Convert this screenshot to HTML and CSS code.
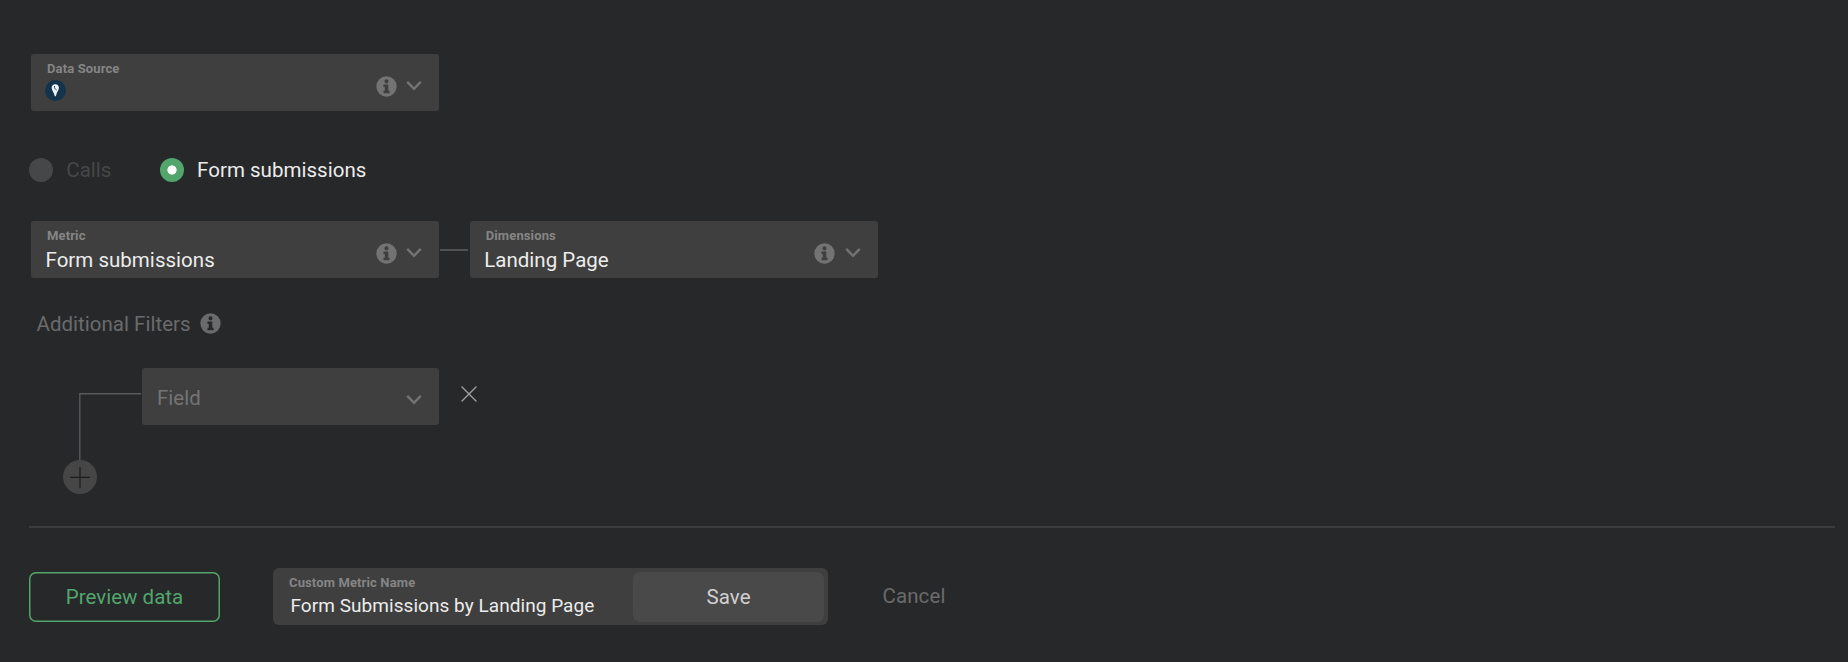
FILE: index.html
```html
<!DOCTYPE html>
<html lang="en">
<head>
<meta charset="utf-8">
<title>Custom metric</title>
<link rel="stylesheet" href="styles.css">
</head>
<body>
<svg class="defs" width="0" height="0">
  <symbol id="info" viewBox="0 0 512 512"><path fill-rule="evenodd" d="M256 8a248 248 0 1 0 0 496a248 248 0 1 0 0-496zM256 80a50 50 0 1 1 0 100a50 50 0 1 1 0-100zM182 210h118v152h30v56H182v-56h32v-96h-32z"/></symbol>
  <symbol id="chevron" viewBox="0 0 16 10"><path d="M2 1.7L8 7.8L14 1.7" fill="none" stroke="currentColor" stroke-width="2.5" stroke-linecap="round"/></symbol>
</svg>
<main class="page">
  <section class="select">
    <div class="select-text">
      <span class="label">Data Source</span>
      <svg class="source-logo" viewBox="0 0 21 21"><circle cx="10.5" cy="10.5" r="10.5" fill="#14334d"/><path d="M10.3 4.2C7.8 4.2 6.4 5.9 6.7 8.2C7 10.6 9 12.5 9.8 16.2H10.9C11.5 12.5 13.6 10.6 13.9 8.2C14.2 5.9 12.8 4.2 10.3 4.2Z" fill="#edf2f5"/><path d="M9.5 6C9.3 8 9.9 9.2 11.5 9.8" fill="none" stroke="#14334d" stroke-width="0.9"/></svg>
    </div>
    <svg class="info"><use href="#info"/></svg>
    <svg class="chevron"><use href="#chevron"/></svg>
  </section>

  <div class="radios">
    <span class="radio"></span><span class="radio-label off">Calls</span>
    <span class="radio on"></span><span class="radio-label">Form submissions</span>
  </div>

  <div class="metric-row">
    <section class="select">
      <div class="select-text"><span class="label">Metric</span><span class="value">Form submissions</span></div>
      <svg class="info"><use href="#info"/></svg>
      <svg class="chevron"><use href="#chevron"/></svg>
    </section>
    <span class="link"></span>
    <section class="select">
      <div class="select-text"><span class="label">Dimensions</span><span class="value">Landing Page</span></div>
      <svg class="info"><use href="#info"/></svg>
      <svg class="chevron"><use href="#chevron"/></svg>
    </section>
  </div>

  <div class="filters-title"><span class="filters-text">Additional Filters</span><svg class="info"><use href="#info"/></svg></div>

  <div class="filter-row">
    <div class="branch">
      <svg class="elbow" viewBox="0 0 62 67"><path d="M0.8 67V0.8H62" fill="none" stroke="#58595b" stroke-width="1.4"/></svg>
      <svg class="add" viewBox="0 0 34 34"><circle cx="17" cy="17" r="17" fill="#464646"/><path d="M7.2 17.3H27M17 7.3V27.7" stroke="#1d1d1d" stroke-width="1.3"/></svg>
    </div>
    <section class="select field">
      <span class="placeholder">Field</span>
      <svg class="chevron"><use href="#chevron"/></svg>
    </section>
    <svg class="remove" viewBox="0 0 16 16"><path d="M1 1L15 15M15 1L1 15" stroke="#a0a1a2" stroke-width="1.4" stroke-linecap="round"/></svg>
  </div>

  <hr class="divider">

  <footer class="actions">
    <button class="preview"><span>Preview data</span></button>
    <div class="name-box">
      <div class="name-text"><span class="label">Custom Metric Name</span><span class="value name">Form Submissions by Landing Page</span></div>
      <button class="save"><span>Save</span></button>
    </div>
    <span class="cancel">Cancel</span>
  </footer>
</main>
</body>
</html>
```

FILE: styles.css
```css
* { box-sizing: border-box; }
body {
  margin: 0;
  background: #27282a;
  color: #ececec;
  font-family: Roboto, "Liberation Sans", sans-serif;
  font-size: 20.5px;
  letter-spacing: 0.02px;
}
.defs { display: block; }
.page { height: 662px; padding: 54px 13px 0 29px; overflow: hidden; }
.page span { white-space: nowrap; }
.select {
  display: flex;
  width: 408px;
  height: 57px;
  margin-left: 2px;
  padding: 0 17px 0 15px;
  border-radius: 3px;
  background: #3f3f3f;
}
.select-text { display: flex; flex: 1; flex-direction: column; align-items: flex-start; }
.label {
  margin: 7px 0 0 1px;
  color: #858585;
  font-size: 13px;
  font-weight: 700;
  line-height: 16px;
  letter-spacing: 0.13px;
}
.value { line-height: 24px; margin: 4px 0 0 -0.5px; }
.source-logo { width: 21px; height: 21px; margin: 3px 0 0 -0.7px; }
.info { width: 21px; height: 21px; margin: 21.5px -0.5px 0 0.5px; fill: #737373; }
.chevron { width: 16px; height: 10px; margin: 26.7px 0 0 10px; color: #737373; }
.radios { display: flex; align-items: center; height: 24px; margin-top: 47px; }
.radio { width: 24px; height: 24px; border-radius: 50%; background: #464748; }
.radio.on { margin-left: 48.5px; background: radial-gradient(circle, #fff 4.2px, #52a66c 5px); }
.radio-label { margin-left: 13.3px; line-height: 24px; }
.radio-label.off { width: 45px; color: #464748; }
.metric-row { display: flex; margin-top: 39px; }
.link { width: 28px; height: 1.5px; margin: 28px 1px 0; background: #505152; }
.metric-row .link + .select { margin-left: 0.7px; }
.filters-title { display: flex; height: 24px; margin: 34px 0 0 7.5px; color: #6a6b6c; }
.filters-text { width: 163px; line-height: 24px; }
.filters-title .info { margin-top: 1px; fill: #6a6b6c; }
.filter-row { display: flex; height: 126px; margin-top: 32px; }
.branch { display: flex; flex-direction: column; width: 112px; padding: 25px 0 0 34px; }
.elbow { flex: none; width: 62px; height: 67px; margin-left: 16px; }
.add { width: 34px; height: 34px; flex: none; }
.field { width: 297px; margin-left: 1px; }
.placeholder { flex: 1; color: #747474; line-height: 60px; }
.field .chevron { margin-top: 27px; }
.remove { width: 16px; height: 16px; margin: 18px 0 0 21.5px; }
.divider { height: 2px; margin: 32px 0 0; border: 0; background: #3b3c3d; }
.actions { display: flex; margin-top: 40px; }
button { padding: 0; font: inherit; letter-spacing: inherit; }
.preview {
  width: 191px;
  height: 50px;
  margin-top: 4px;
  border: 0;
  border-radius: 7px;
  background: none;
  box-shadow: inset 0 0 0 1.5px #52a66c;
  color: #52a66c;
}
.name-box { display: flex; width: 555px; height: 57px; margin-left: 53px; padding: 0 4px 0 16px; border-radius: 6px; background: #3f3f3f; }
.name-text { display: flex; flex: 1; flex-direction: column; align-items: flex-start; }
.name-text .label { margin-left: 0; }
.name { margin: 3px 0 0 1.5px; font-size: 19px; letter-spacing: 0.05px; }
.save { width: 191px; height: 50px; margin-top: 4px; border: 0; border-radius: 7px; background: #494949; color: #d0d0d0; letter-spacing: 0.1px; }
.cancel { margin: 16px 0 0 54.5px; color: #6a6b6c; line-height: 24px; letter-spacing: 0.1px; }
```
